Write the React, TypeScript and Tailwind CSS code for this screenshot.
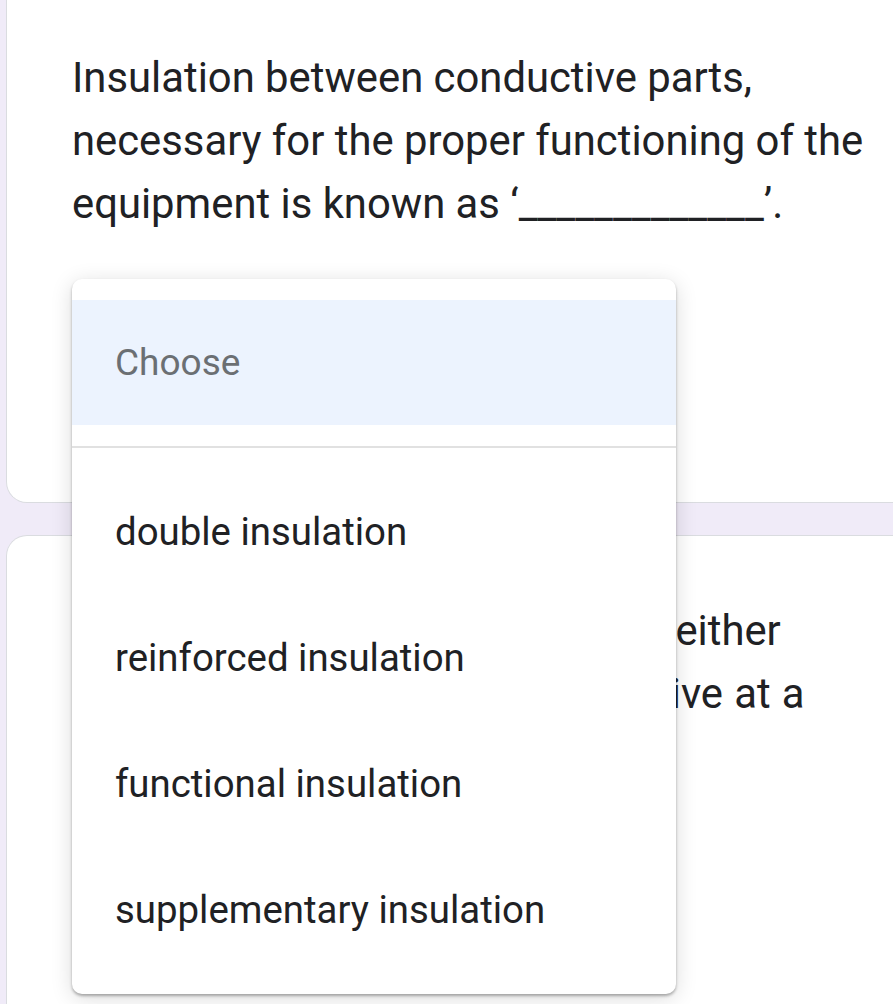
import React from 'react';

const options = [
  'double insulation',
  'reinforced insulation',
  'functional insulation',
  'supplementary insulation',
];

const App: React.FC = () => {
  return (
    <div
      className="relative h-[1004px] w-[893px] overflow-hidden bg-[#f0ebf8] pl-[6px] text-[#202124]"
      style={{ fontFamily: 'Roboto, "Noto Sans", sans-serif' }}
    >
      {/* question card */}
      <div className="h-[503px] rounded-bl-[21px] border border-t-0 border-r-0 border-[#dadce0] bg-white pl-[65px] pt-[46px]">
        <p className="text-[41.8px] leading-[63px]">
          Insulation between conductive parts,
          <br />
          necessary for the proper functioning of the
          <br />
          equipment is known as ‘_____________’.
        </p>
      </div>

      {/* next card, mostly hidden by the menu */}
      <div className="mt-[32px] h-[500px] rounded-tl-[21px] border border-b-0 border-r-0 border-[#dadce0] bg-white pl-[65px] pt-[63px]">
        <p className="whitespace-nowrap text-[41.8px] leading-[63px]">
          <span className="[word-spacing:-1.4px]">Equipment whose parts must be either</span>
          <br />
          <span className="[word-spacing:0.8px]">accessible, conductive parts or live at a</span>
          <br />
          hazardous voltage
        </p>
      </div>

      {/* open dropdown menu */}
      <div className="absolute left-[72px] top-[279px] w-[604px] rounded-[10px] bg-white py-[21px] shadow-[0_2px_3px_rgba(0,0,0,0.3),0_4px_22px_rgba(0,0,0,0.14)]">
        <div className="flex h-[125px] items-center bg-[#ecf3fe] pl-[43px] text-[37px] text-[#6b6f73]">
          Choose
        </div>
        <div className="mt-[21px] h-[2px] bg-[#e1e1e1]" />
        <div className="pt-[21px]">
          {options.map((o) => (
            <div key={o} className="flex h-[126px] items-center pl-[43px] text-[38.4px]">
              {o}
            </div>
          ))}
        </div>
      </div>
    </div>
  );
};

export default App;
